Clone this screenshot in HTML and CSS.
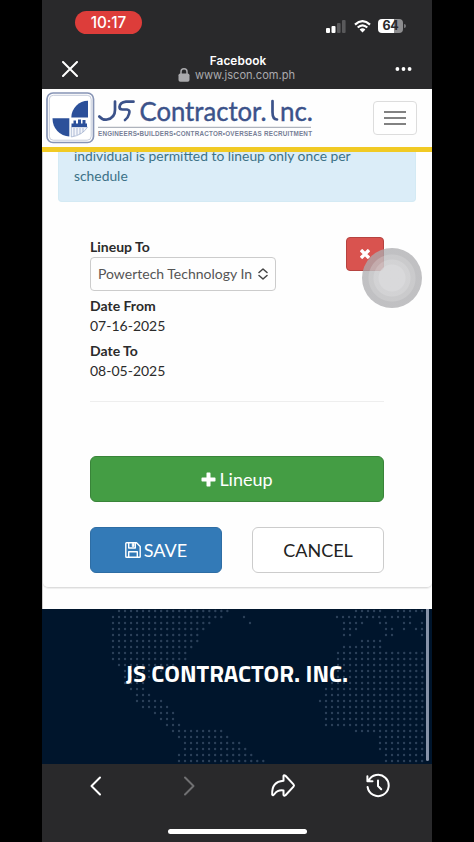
FILE: index.html
```html
<!DOCTYPE html>
<html lang="en">
<head>
<meta charset="utf-8">
<meta name="viewport" content="width=device-width, initial-scale=1">
<title>JS Contractor. Inc.</title>
<link rel="stylesheet" href="styles.css">
</head>
<body>
<div class="phone">
  <header class="chrome">
    <div class="status">
      <span class="clock">10:17</span>
      <span class="indicators">
        <svg class="signal" width="20" height="13" viewBox="0 0 20 13"><rect x="0" y="8" width="4" height="5" rx="1" fill="#fff"/><rect x="5.5" y="6" width="4" height="7" rx="1" fill="#fff"/><rect x="11" y="3" width="3.6" height="10" rx="1" fill="#59595b"/><rect x="16" y="0" width="3.6" height="13" rx="1" fill="#59595b"/></svg>
        <svg class="wifi" width="17" height="13" viewBox="0 0 17 13" fill="none" stroke="#fff" stroke-width="2.2"><path d="M1 4.6Q8.500-2.300 16 4.600M3.700 7.500Q8.500 3.100 13.300 7.500"/><path d="M8.500 12.500L5.600 9.500Q8.500 7.200 11.400 9.500Z" fill="#fff" stroke="none"/></svg>
        <span class="battery">64</span><i class="battery-cap"></i>
      </span>
    </div>
    <div class="titlebar">
      <svg width="16" height="16" viewBox="0 0 16 16" stroke="#fff" stroke-width="2" stroke-linecap="round"><path d="M1 1L15 15M15 1L1 15"/></svg>
      <div class="site">
        <strong>Facebook</strong>
        <span><svg width="12" height="14" viewBox="0 0 12 14"><rect x=".5" y="5.500" width="11" height="8.300" rx="1.800" fill="#aaaaad"/><path d="M3 6V3.800a3 3 0 0 1 6 0V6" fill="none" stroke="#aaaaad" stroke-width="1.500"/></svg>www.jscon.com.ph</span>
      </div>
      <svg width="17" height="4" viewBox="0 0 17 4" fill="#fff"><circle cx="2.400" cy="2" r="1.900"/><circle cx="8.500" cy="2" r="1.900"/><circle cx="14.600" cy="2" r="1.900"/></svg>
    </div>
  </header>

  <nav class="navbar">
    <svg class="logo" width="268" height="52" viewBox="0 0 268 52">
      <rect x="1" y="0" width="46.500" height="49.500" rx="6" fill="#fff" stroke="#8794b5" stroke-width="1.700"/>
      <rect x="3.300" y="2.300" width="41.900" height="44.900" rx="4" fill="none" stroke="#b7bfd2" stroke-width=".8"/>
      <path d="M25.300 24.500A17 17 0 0 1 42 7.700V24.500Z" fill="#2c509a"/>
      <path d="M6.500 25.300H23.300V43.500A17 18 0 0 1 6.500 25.300Z" fill="#2c509a"/>
      <path d="M25.300 34V44Q37 42 41.500 34Z" fill="#f4f6fb" stroke="#9aaaca" stroke-width=".7"/>
      <path d="M25.500 34V30.500H27.500V27.500H30V30.500H32V26.500H35V30.500H36.500V27H39.500V30.500H41V34Z" fill="#2c509a"/>
      <path d="M28 35V43M31 35V42M34 35V41M37 35V39" stroke="#8fa0c6" stroke-width=".7"/>
      <g fill="none" stroke="#3b528a" stroke-width="2.700" stroke-linecap="round" stroke-linejoin="round">
        <path d="M53.300 23.500Q57 27.500 61 26.500Q69 25 69 17V8.500"/>
        <path d="M87.500 8.700H80Q74 9.300 73.500 14Q73.500 16.500 76.500 16.500H81Q84.500 17 83 21Q82 25 79 27"/>
        <path d="M226.500 8V19Q226.500 26.500 231 26.500"/>
      </g>
      <g class="wordmark">
        <text x="93.500" y="27.500" textLength="127" lengthAdjust="spacingAndGlyphs">Contractor.</text>
        <text x="234" y="27.500" textLength="33" lengthAdjust="spacingAndGlyphs">nc.</text>
      </g>
      <path d="M52 34.300H265" stroke="#9aa0ac" stroke-width="1"/>
      <text class="tagline" x="52" y="42.800" textLength="214" lengthAdjust="spacing">ENGINEERS•BUILDERS•CONTRACTOR•OVERSEAS RECRUITMENT</text>
    </svg>
    <button class="menu" aria-label="Menu"><i></i><i></i><i></i></button>
  </nav>

  <main class="page">
    <div class="card">
      <div class="alert">individual is permitted to lineup only once per<br>schedule</div>
      <section class="entry">
        <div class="fields">
          <label>Lineup To</label>
          <div class="select"><span>Powertech Technology In</span><svg width="10" height="12" viewBox="0 0 10 12" fill="none" stroke="#444" stroke-width="1.500" stroke-linecap="round" stroke-linejoin="round"><path d="M1 4.500L5 1L9 4.500M1 7.500L5 11L9 7.500"/></svg></div>
          <label>Date From</label>
          <p>07-16-2025</p>
          <label>Date To</label>
          <p>08-05-2025</p>
        </div>
        <button class="remove" aria-label="Remove"><svg width="10" height="10" viewBox="0 0 10 10" stroke="#fff" stroke-width="3.400"><path d="M1 1L9 9M9 1L1 9"/></svg><span class="assistive"></span></button>
      </section>
      <hr>
      <button class="btn add"><svg width="15" height="15" viewBox="0 0 15 15"><path d="M5.500 1.200Q5.500 .5 6.200 .5H8.800Q9.500 .5 9.500 1.200V5.500H13.800Q14.500 5.500 14.500 6.200V8.800Q14.500 9.500 13.800 9.500H9.500V13.800Q9.500 14.500 8.800 14.500H6.200Q5.500 14.500 5.500 13.800V9.500H1.200Q.5 9.500 .5 8.800V6.200Q.5 5.500 1.200 5.500H5.500Z" fill="#fff"/></svg>Lineup</button>
      <div class="actions">
        <button class="btn save"><svg width="16" height="16" viewBox="0 0 16 16" fill="none" stroke="#fff" stroke-width="1.400" stroke-linejoin="round"><path d="M.8 1.600Q.8 .8 1.600 .8H11.500L15.200 4.500V14.400Q15.200 15.200 14.400 15.200H1.600Q.8 15.200 .8 14.400ZM3.700 15V9.700H12.300V15M3.700 1V6H10.300V1"/><path d="M7.200 1.500H9V4.500H7.200Z" fill="#fff" stroke-width=".7"/></svg>SAVE</button>
        <button class="btn cancel">CANCEL</button>
      </div>
    </div>
  </main>

  <footer class="footer">
    <svg class="map" width="390" height="155" viewBox="0 0 390 155" fill="none" stroke="#2b4059" stroke-width="2.400" stroke-linecap="round" stroke-dasharray="0 6.020">
      <path d="M77 2H186.500M71 8H180.500M71 14H168.500M71 20H162.500M71 26H156.500M71 32H156.500M71 38H150.500M71 44H144.500M71 50H144.500M77 56H132.500M83 62H126M83 68H108M83 74H102M89 80H102M95 86H108M95 92H120M101 98H126M113 104H132M119 110H132M125 116H138M131 122H180M137 128H186M143 134H198M143 140H204M137 146H210M137 152H222M202 8H203M208 14H209"/>
      <path d="M314 2H339M356 2H381M295 8H346M350 8H369M302 14H321M338 14H345M362 14H369M380 14H381M302 20H315M344 20H351M362 20H363M374 20H381M302 26H309M344 26H351M380 26H381M320 32H339M302 38H339M296 44H381M296 50H381M296 56H381M296 62H381M296 68H381M290 74H381M284 80H381M284 86H381M278 92H381M284 98H381M284 104H381M284 110H381M284 116H381M314 122H381M338 128H381M338 134H381M338 140H381M344 146H381M344 152H381"/>
    </svg>
    <h2>JS CONTRACTOR. INC.</h2>
    <i class="scrollbar"></i>
  </footer>

  <div class="toolbar">
    <div class="tools">
      <svg width="24" height="24" viewBox="0 0 24 24"><path d="M16 3.500L7.500 12L16 20.500"/></svg>
      <svg class="dim" width="24" height="24" viewBox="0 0 24 24"><path d="M8 3.500L16.500 12L8 20.500"/></svg>
      <svg width="26" height="26" viewBox="0 0 26 26"><path d="M13.500 2.800Q14 1.600 15.500 2.800L23.500 11.400Q24.500 12.500 23.500 13.600L15.500 22.200Q14 23.400 13.500 22V17.500Q8 16.500 4.500 21Q3 23.200 2.200 21.500Q1.500 8.700 13.500 7.800Z"/></svg>
      <svg width="26" height="26" viewBox="0 0 26 26"><path d="M3.400 8.200A10.600 10.600 0 1 1 2.600 14M2.400 3.300V8.300H7.500M13 7.500V13L16.200 16.200"/></svg>
    </div>
    <i class="home"></i>
  </div>
</div>
</body>
</html>
```
FILE: styles.css
```css
* { box-sizing: border-box; }
body { margin: 0; background: #000; font-family: Lato, "Liberation Sans", sans-serif; color: #2b2b2b; }
svg { display: block; flex: none; }
button { font: inherit; padding: 0; }
.phone { width: 390px; height: 842px; margin-left: 42px; display: flex; flex-direction: column; background: #fff; overflow: hidden; }

.chrome { height: 89px; flex: none; background: #29292b; color: #fff; font-family: Inter, sans-serif; }
.status { display: flex; justify-content: space-between; padding: 11px 26px 0 33px; height: 51px; }
.clock { width: 67px; height: 23px; border-radius: 12px; background: #dd3d3a; font-size: 15.3px; line-height: 23px; font-weight: 500; text-align: center; letter-spacing: -.1px; }
.indicators { display: flex; align-items: center; height: 14px; margin-top: 8px; }
.wifi { margin: 0 7px 0 8px; }
.battery { flex: none; width: 25px; height: 14px; border-radius: 4px; background: linear-gradient(90deg, #fff 65%, #8d8d8f 65%); color: #29292b; font-size: 12.5px; font-weight: 700; line-height: 14px; text-align: center; letter-spacing: -.3px; }
.battery-cap { width: 2px; height: 4px; margin-left: 1px; border-radius: 0 2px 2px 0; background: #77777a; }
.titlebar { display: flex; justify-content: space-between; align-items: center; padding: 0 20px; height: 36px; }
.site { display: flex; flex-direction: column; align-items: center; font-size: 12px; line-height: 14px; margin-top: -2px; }
.site strong { font-weight: 600; font-size: 11.8px; letter-spacing: .1px; margin-left: 3px; }
.site span { display: flex; gap: 5px; color: #aaaaad; font-size: 11.1px; letter-spacing: 0; }

.navbar { height: 63px; flex: none; display: flex; justify-content: space-between; padding: 4px 15px 0 4px; border-bottom: 5px solid #f1ca24; background: #fefefe; }
.logo { overflow: visible; }
.wordmark { font-family: Lato, sans-serif; font-size: 27.5px; fill: #3b528a; stroke: #3b528a; stroke-width: .4px; }
.tagline { font-family: "Liberation Sans", sans-serif; font-weight: 700; font-size: 6.3px; fill: #777e96; }
.menu { width: 44px; height: 34px; margin-top: 8px; display: flex; flex-direction: column; align-items: center; justify-content: center; gap: 4px; border: 1px solid #ddd; border-radius: 4px; background: #fff; }
.menu i { width: 22px; height: 2px; background: #828282; }

.page { flex: none; height: 457px; overflow: hidden; background: #fefefe; border-left: 1px solid #ccc; }
.card { height: 436px; border-bottom: 1px solid #ddd; border-radius: 0 0 5px 5px; padding: 0 48px 0 47px; box-shadow: 0 1px 1px #eee; }
.alert { display: flow-root; height: 50px; margin: 0 -32px; padding: 0 15px; border-radius: 0 0 4px 4px; background: #dbedf8; border: 1px solid #d4eaf4; border-top: 0; color: #3d7287; font-size: 13.85px; line-height: 20px; white-space: nowrap; }
.alert::before { content: ""; display: block; margin-top: -6px; }
.entry { display: flex; justify-content: space-between; margin-top: 35px; height: 152px; }
.fields { width: 186px; font-size: 14px; line-height: 20px; }
.fields label { display: block; font-weight: 700; }
.fields p { margin: 0 0 5px; }
.select { display: flex; align-items: center; justify-content: space-between; height: 34px; margin: 0 0 5px; padding: 0 7px; border: 1.500px solid #ccc; border-radius: 4px; color: #555; white-space: nowrap; }
.remove { position: relative; width: 38px; height: 34px; border: 1px solid #b64340; border-radius: 4px; background: #d9534f; display: grid; place-items: center; }
.assistive { position: absolute; left: 15px; top: 10px; width: 60px; height: 60px; border-radius: 50%; background: radial-gradient(circle, rgba(215,215,217,.95) 0 13px, rgba(203,203,205,.85) 14px 18px, rgba(191,191,193,.82) 19px 23px, rgba(172,172,175,.75) 24px 30px); }
hr { margin: 12px 0 54px; border: 0; border-top: 1px solid #eee; }
.btn { display: flex; align-items: center; justify-content: center; height: 46px; border-radius: 6px; border: 1px solid; font-size: 18px; }
.add { width: 100%; gap: 3px; background: #449d44; border-color: #398439; color: #fff; }
.actions { display: flex; justify-content: space-between; margin-top: 25px; }
.actions .btn { width: 132px; }
.save { gap: 3px; background: #337ab7; border-color: #2e6da4; color: #fff; }
.cancel { background: #fff; border-color: #ccc; color: #222; }

.footer { position: relative; flex: none; height: 155px; background: #00152c; }
.map { position: absolute; left: 0; top: 0; }
.footer h2 { position: relative; margin: 0; padding-top: 49px; text-align: center; color: #fff; font-family: "Titillium Web", Roboto, sans-serif; font-size: 24px; line-height: 30px; font-weight: 700; white-space: nowrap; }
.scrollbar { position: absolute; right: 3px; top: 0; width: 3px; height: 152px; background: #8793a8; border-radius: 0 0 2px 2px; }

.toolbar { flex: none; height: 78px; background: #29292b; }
.tools { display: flex; align-items: center; justify-content: space-between; padding: 9px 41px 0 42px; }
.tools svg { fill: none; stroke: #fff; stroke-width: 2; stroke-linecap: round; stroke-linejoin: round; }
.tools .dim { stroke: #707072; }
.home { display: block; width: 139px; height: 5px; margin: 30px auto 0; border-radius: 3px; background: #fff; }
```
